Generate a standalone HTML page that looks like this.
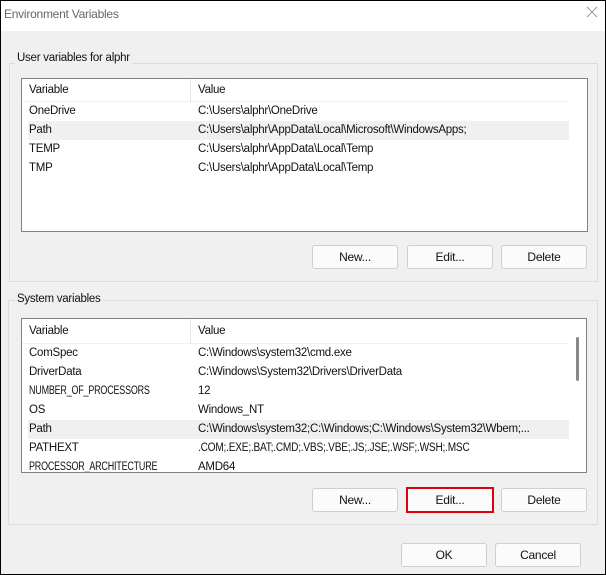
<!DOCTYPE html>
<html><head><style>
*{box-sizing:border-box;margin:0;padding:0}
body{width:606px;height:575px;background:#000;font-family:"Liberation Sans",sans-serif;font-size:11.5px;letter-spacing:-0.25px;color:#111;position:relative;overflow:hidden}
.win{position:absolute;left:1px;top:1px;width:604px;height:573px;background:#f0f0f0}
.title{position:absolute;left:0;top:0;width:604px;height:30px;background:#fff;}
.title span{position:absolute;left:3px;top:6px;color:#666;font-size:12px}
.x{position:absolute;right:6px;top:4px;width:14px;height:14px}
.grp{position:absolute;border:1px solid #dcdcdc;}
.leg{position:absolute;background:#f0f0f0;padding:0 2px}
.list{position:absolute;background:#fff;border:1px solid #828282;overflow:hidden}
.row{position:absolute;left:6px;height:19px;line-height:19px;width:541px}
.row .a{position:absolute;left:1px;white-space:nowrap}
.row .b{position:absolute;left:170px;white-space:nowrap}
.c{display:inline-block;transform:scaleX(.78);transform-origin:left}
.hdr{position:absolute;left:0;top:0;height:23px;width:547px;border-bottom:1px solid #f0f0f0}
.hdr .div{position:absolute;left:168px;top:0;width:1px;height:23px;background:#e5e5e5}
.sel{background:#f0f0f0}
.btn{position:absolute;width:86px;height:24px;background:#fbfbfb;border:1px solid #cfcfcf;border-radius:3px;text-align:center;line-height:22px;font-size:12px}
</style></head><body><div class="win">
<div class="title"><span>Environment Variables</span>
<svg class="x" viewBox="0 0 14 14"><path d="M2 2L12 12M12 2L2 12" stroke="#999" stroke-width="1"/></svg></div>

<div class="grp" style="left:8px;top:62px;width:589px;height:219px"></div>
<div class="leg" style="left:14px;top:51px">User variables for alphr</div>
<div class="list" style="left:20px;top:77px;width:567px;height:154px">
 <div class="hdr"><div class="row" style="top:2px"><span class="a">Variable</span><span class="b">Value</span></div><div class="div"></div></div>
 <div class="row" style="top:23px"><span class="a">OneDrive</span><span class="b">C:\Users\alphr\OneDrive</span></div>
 <div class="row sel" style="top:42px"><span class="a">Path</span><span class="b">C:\Users\alphr\AppData\Local\Microsoft\WindowsApps;</span></div>
 <div class="row" style="top:61px"><span class="a">TEMP</span><span class="b">C:\Users\alphr\AppData\Local\Temp</span></div>
 <div class="row" style="top:80px"><span class="a">TMP</span><span class="b">C:\Users\alphr\AppData\Local\Temp</span></div>
</div>
<div class="btn" style="left:311px;top:244px">New...</div>
<div class="btn" style="left:406px;top:244px">Edit...</div>
<div class="btn" style="left:500px;top:244px">Delete</div>

<div class="grp" style="left:7px;top:299px;width:590px;height:225px"></div>
<div class="leg" style="left:14px;top:292px">System variables</div>
<div class="list" style="left:20px;top:317px;width:566px;height:155px">
 <div class="hdr" style="height:25px"><div class="row" style="top:3px"><span class="a">Variable</span><span class="b">Value</span></div><div class="div" style="height:25px"></div></div>
 <div class="row" style="top:25px"><span class="a">ComSpec</span><span class="b">C:\Windows\system32\cmd.exe</span></div>
 <div class="row" style="top:44px"><span class="a">DriverData</span><span class="b">C:\Windows\System32\Drivers\DriverData</span></div>
 <div class="row" style="top:63px"><span class="a"><span class="c">NUMBER_OF_PROCESSORS</span></span><span class="b">12</span></div>
 <div class="row" style="top:82px"><span class="a">OS</span><span class="b">Windows_NT</span></div>
 <div class="row sel" style="top:101px"><span class="a">Path</span><span class="b">C:\Windows\system32;C:\Windows;C:\Windows\System32\Wbem;...</span></div>
 <div class="row" style="top:120px"><span class="a">PATHEXT</span><span class="b"><span class="c" style="transform:scaleX(.88)">.COM;.EXE;.BAT;.CMD;.VBS;.VBE;.JS;.JSE;.WSF;.WSH;.MSC</span></span></div>
 <div class="row" style="top:139px"><span class="a"><span class="c">PROCESSOR_ARCHITECTURE</span></span><span class="b">AMD64</span></div>
 <div style="position:absolute;left:554px;top:18px;width:3px;height:44px;background:#888;border-radius:2px"></div>
</div>
<div class="btn" style="left:311px;top:487px">New...</div>
<div class="btn" style="left:405px;top:486px;width:88px;height:26px;border:2px solid #e00010;border-radius:0;line-height:22px">Edit...</div>
<div class="btn" style="left:500px;top:487px">Delete</div>

<div class="btn" style="left:400px;top:542px">OK</div>
<div class="btn" style="left:494px;top:542px">Cancel</div>
</div></body></html>
